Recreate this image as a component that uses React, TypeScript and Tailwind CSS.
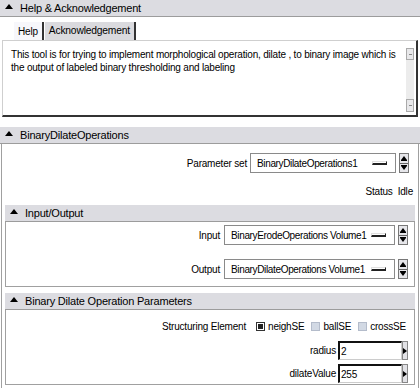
import React from 'react';

const UpTri = () => (
  <span className="inline-block w-0 h-0 border-l-[4px] border-r-[4px] border-b-[5px] border-l-transparent border-r-transparent border-b-black" />
);

const Header = ({ title, className = '' }: { title: string; className?: string }) => (
  <div className={`h-[17px] flex items-center bg-[#dcdce1] border-b border-[#9c9c9c] ${className}`}>
    <span className="ml-[5px] mr-[7px] mb-[4px] flex"><UpTri /></span>
    <span className="leading-none text-[11px]">{title}</span>
  </div>
);

const Spinner = () => (
  <div className="flex flex-col w-[10px] h-[20px] ml-[3px] border border-[#777] bg-[#e6e6ea]">
    <div className="flex-1 flex flex-col items-center justify-center border-b border-[#666]">
      <span className="inline-block w-0 h-0 border-l-[3px] border-r-[3px] border-b-[4px] border-l-transparent border-r-transparent border-b-black" />
      <span className="w-[6px] h-px bg-black" />
    </div>
    <div className="flex-1 flex flex-col items-center justify-center">
      <span className="w-[6px] h-px bg-black" />
      <span className="inline-block w-0 h-0 border-l-[3px] border-r-[3px] border-t-[4px] border-l-transparent border-r-transparent border-t-black" />
    </div>
  </div>
);

const Combo = ({ value, className }: { value: string; className: string }) => (
  <div className={`h-[20px] flex items-center border border-[#8a8a8a] bg-white pl-[6px] pr-[8px] ${className}`}>
    <span className="flex-1 whitespace-nowrap tracking-[-0.35px]">{value}</span>
    <span className="ml-[4px] w-[15px] h-[4px] border-t border-l border-[#e0e0e0] border-b-2 border-r border-b-[#222] border-r-[#222]" />
  </div>
);

const Check = ({ label, checked }: { label: string; checked?: boolean }) => (
  <div className="flex items-center">
    {checked ? (
      <span className="w-[9px] h-[9px] border border-[#333] bg-white flex items-center justify-center">
        <span className="w-[5px] h-[5px] bg-[#222]" />
      </span>
    ) : (
      <span className="w-[9px] h-[9px] border border-[#b4bccb] bg-[#d2d9e4]" />
    )}
    <span className="ml-[3px]">{label}</span>
  </div>
);

const Field = ({ label, value }: { label: string; value: string }) => (
  <div className="flex items-center justify-end">
    <span className="mr-[2px]">{label}</span>
    <div className="w-[64px] h-[19px] flex items-center bg-white border-t-2 border-l-2 border-[#111] border-r border-b border-r-[#ccc] border-b-[#ccc] pl-[1px]">
      {value}
    </div>
    <div className="w-[6px] h-[19px] flex items-center justify-center bg-[#e2e2e6] border border-[#888]">
      <span className="inline-block w-0 h-0 border-t-[3px] border-b-[3px] border-l-[4px] border-t-transparent border-b-transparent border-l-black" />
    </div>
  </div>
);

export default function App() {
  return (
    <div
      className="w-[420px] h-[388px] overflow-hidden bg-white text-black text-[10px] tracking-[-0.2px] flex flex-col"
      style={{ fontFamily: '"Liberation Sans", Arial, sans-serif' }}
    >
      <Header title="Help & Acknowledgement" />

      {/* tabs */}
      <div className="flex pl-[14px] pt-[5px] h-[23px]">
        <div className="h-[18px] px-[4px] flex items-center bg-[#f7f7fb] border-r-2 border-[#333]">Help</div>
        <div className="h-[18px] px-[4px] ml-px flex items-center bg-[#dadade] border-r-2 border-[#333] text-[10.3px]">Acknowledgement</div>
      </div>

      {/* text area */}
      <div className="mx-[2px] h-[77px] flex border-t border-l border-[#cfcfcf] border-r-2 border-b-2 border-r-[#333] border-b-[#333] bg-white">
        <div className="flex-1 pl-[8px] pt-[7px] leading-[13px]">
          <div className="whitespace-nowrap">This tool is for trying to implement morphological operation, dilate , to binary image which is</div>
          <div className="whitespace-nowrap">the output of labeled binary thresholding and labeling</div>
        </div>
        <div className="w-[8px] mr-[2px] mt-[7px] mb-[3px] flex flex-col bg-[#ececec]">
          <div className="h-[12px] bg-[#e8e8ea] border border-[#aaa] flex items-center justify-center">
            <span className="w-[3px] h-px bg-[#888]" />
          </div>
          <div className="flex-1" />
          <div className="h-[13px] bg-[#e8e8ea] border border-[#aaa] flex items-center justify-center">
            <span className="w-[3px] h-px bg-[#888]" />
          </div>
        </div>
      </div>

      <div className="h-[10px]" />
      <Header title="BinaryDilateOperations" />

      <div className="flex-1 mx-[1px] border-l border-r border-[#a0a0a0] flex flex-col">
        <div className="flex items-center justify-end pr-[9px] pt-[9px]">
          <span className="mr-[3px]">Parameter set</span>
          <Combo value="BinaryDilateOperations1" className="w-[146px]" />
          <Spinner />
        </div>
        <div className="flex justify-end pr-[5px] mt-[12px] h-[13px] items-center">
          <span>Status</span>
          <span className="ml-[5px]">Idle</span>
        </div>

        <div className="mx-[3px] mt-[7px]">
          <Header title="Input/Output" />
          <div className="border-l border-r border-b border-[#a0a0a0] pr-[6px] pt-[3px] pb-[7px] flex flex-col gap-[14px]">
            <div className="flex items-center justify-end">
              <span className="mr-[4px]">Input</span>
              <Combo value="BinaryErodeOperations Volume1" className="w-[171px]" />
              <Spinner />
            </div>
            <div className="flex items-center justify-end">
              <span className="mr-[4px]">Output</span>
              <Combo value="BinaryDilateOperations Volume1" className="w-[171px]" />
              <Spinner />
            </div>
          </div>
        </div>

        <div className="mx-[3px] mt-[6px]">
          <Header title="Binary Dilate Operation Parameters" />
          <div className="border-l border-r border-b border-[#a0a0a0] pr-[6px] pt-[9px] pb-[1px] flex flex-col">
            <div className="flex items-center justify-end pr-[2px] h-[14px]">
              <span className="mr-[10px]">Structuring Element</span>
              <div className="flex items-center gap-[7px]">
                <Check label="neighSE" checked />
                <Check label="ballSE" />
                <Check label="crossSE" />
              </div>
            </div>
            <div className="mt-[8px] flex flex-col gap-[4px]">
              <Field label="radius" value="2" />
              <Field label="dilateValue" value="255" />
            </div>
          </div>
        </div>
      </div>
    </div>
  );
}
